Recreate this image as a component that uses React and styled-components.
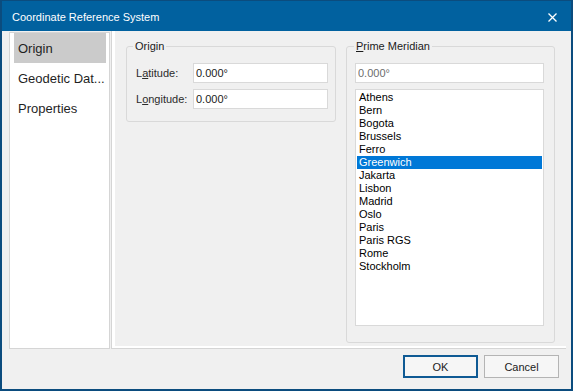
import styled, { createGlobalStyle } from "styled-components"

const GlobalStyle = createGlobalStyle`
  html, body {
    margin: 0;
    padding: 0;
    background: #ffffff;
  }
  * {
    box-sizing: border-box;
  }
`

const Window = styled.div`
  width: 573px;
  height: 391px;
  border: 2px solid #0b4c7e;
  border-top-width: 1px;
  display: flex;
  flex-direction: column;
  background: #f0f0f0;
  font-family: "Liberation Sans", Arial, sans-serif;
  color: #1b1b1b;
`

const TitleBar = styled.div`
  height: 30px;
  flex: none;
  display: flex;
  align-items: center;
  justify-content: space-between;
  background: #01619f;
  padding: 2px 14px 0 10px;
`

const Title = styled.div`
  color: #ffffff;
  font-size: 11px;
`

const CloseButton = styled.div`
  width: 10px;
  height: 10px;
  display: flex;
  align-items: center;
  justify-content: center;
`

const Body = styled.div`
  flex: 1;
  display: flex;
  flex-direction: column;
`

const Main = styled.div`
  height: 318px;
  display: flex;
  gap: 1px;
  padding-left: 7px;
  padding-right: 5px;
`

const Nav = styled.div`
  width: 101px;
  margin-top: 1px;
  background: #ffffff;
  border: 1px solid #d5d5d5;
  padding: 0 3px 0 4px;
  display: flex;
  flex-direction: column;
`

const NavItem = styled.div`
  height: 30px;
  display: flex;
  align-items: center;
  padding-left: 4px;
  font-size: 13px;
  color: #1f1f1f;
  white-space: nowrap;
  overflow: hidden;
  background: ${p => (p.$active ? "#cbcbcb" : "transparent")};
`

const Panel = styled.div`
  flex: 1;
  border-left: 1px solid #d5d5d5;
  border-bottom: 1px solid #d5d5d5;
`

const PanelInner = styled.div`
  height: 100%;
  border-left: 3px solid #ffffff;
  border-bottom: 2px solid #ffffff;
  display: flex;
  align-items: flex-start;
  gap: 10px;
  padding: 9px 0 0 11px;
`

const Group = styled.fieldset`
  margin: 0;
  width: ${p => p.$width};
  height: ${p => p.$height};
  border: 1px solid #d9d9d9;
  border-radius: 3px;
  padding: 10px 7px 0 ${p => p.$padLeft || "9px"};
  display: flex;
  flex-direction: column;
  gap: 6px;
  min-width: 0;
`

const Legend = styled.legend`
  margin-left: ${p => p.$offset || "0px"};
  padding: 0 2px;
  font-size: 11px;
  line-height: 13px;
  color: #1b1b1b;
`

const FieldRow = styled.div`
  display: flex;
  align-items: center;
  height: 20px;
`

const Label = styled.label`
  width: 57px;
  flex: none;
  font-size: 11px;
  color: #2b2b2b;
`

const TextBox = styled.input`
  width: ${p => p.$width};
  height: 20px;
  border: 1px solid #d9d9d9;
  background: #ffffff;
  padding: 0 2px;
  margin: 0;
  font-family: "Liberation Sans", Arial, sans-serif;
  font-size: 11px;
  color: ${p => (p.$muted ? "#6d6d6d" : "#1b1b1b")};
  outline: none;
`

const ListBox = styled.ul`
  width: 189px;
  height: 237px;
  margin: 0;
  padding: 1px;
  list-style: none;
  background: #ffffff;
  border: 1px solid #d9d9d9;
`

const ListItem = styled.li`
  height: 13px;
  line-height: 13px;
  padding-left: 2px;
  font-size: 11px;
  color: ${p => (p.$selected ? "#ffffff" : "#000000")};
  background: ${p => (p.$selected ? "#0078d7" : "transparent")};
`

const Footer = styled.div`
  display: flex;
  justify-content: flex-end;
  gap: 6px;
  padding: 6px 12px 0 0;
`

const Button = styled.button`
  width: 75px;
  height: 23px;
  margin: 0;
  padding: 0;
  font-family: "Liberation Sans", Arial, sans-serif;
  font-size: 11px;
  color: #1b1b1b;
  background: #f6f6f6;
  border: ${p => (p.$default ? "2px solid #0f5a94" : "1px solid #b4b4b4")};
`

const meridians = [
  "Athens", "Bern", "Bogota", "Brussels", "Ferro", "Greenwich", "Jakarta",
  "Lisbon", "Madrid", "Oslo", "Paris", "Paris RGS", "Rome", "Stockholm",
]

export default function App() {
  return (
    <>
      <GlobalStyle />
      <Window>
        <TitleBar>
          <Title>Coordinate Reference System</Title>
          <CloseButton>
            <svg width="9" height="9" viewBox="0 0 9 9">
              <path d="M0.5 0.5 L8.5 8.5 M8.5 0.5 L0.5 8.5" stroke="#ffffff" strokeWidth="1.3" />
            </svg>
          </CloseButton>
        </TitleBar>
        <Body>
          <Main>
            <Nav>
              <NavItem $active>Origin</NavItem>
              <NavItem>Geodetic Dat...</NavItem>
              <NavItem>Properties</NavItem>
            </Nav>
            <Panel>
              <PanelInner>
                <Group $width="210px" $height="82px">
                  <Legend $offset="-3px">Origin</Legend>
                  <FieldRow>
                    <Label>L<u>a</u>titude:</Label>
                    <TextBox $width="135px" readOnly value="0.000°" />
                  </FieldRow>
                  <FieldRow>
                    <Label>L<u>o</u>ngitude:</Label>
                    <TextBox $width="135px" readOnly value="0.000°" />
                  </FieldRow>
                </Group>
                <Group $width="209px" $height="303px" $padLeft="8px">
                  <Legend $offset="-1px"><u>P</u>rime Meridian</Legend>
                  <TextBox $width="189px" $muted readOnly value="0.000°" />
                  <ListBox>
                    {meridians.map(m => (
                      <ListItem key={m} $selected={m === "Greenwich"}>{m}</ListItem>
                    ))}
                  </ListBox>
                </Group>
              </PanelInner>
            </Panel>
          </Main>
          <Footer>
            <Button $default>OK</Button>
            <Button>Cancel</Button>
          </Footer>
        </Body>
      </Window>
    </>
  )
}
